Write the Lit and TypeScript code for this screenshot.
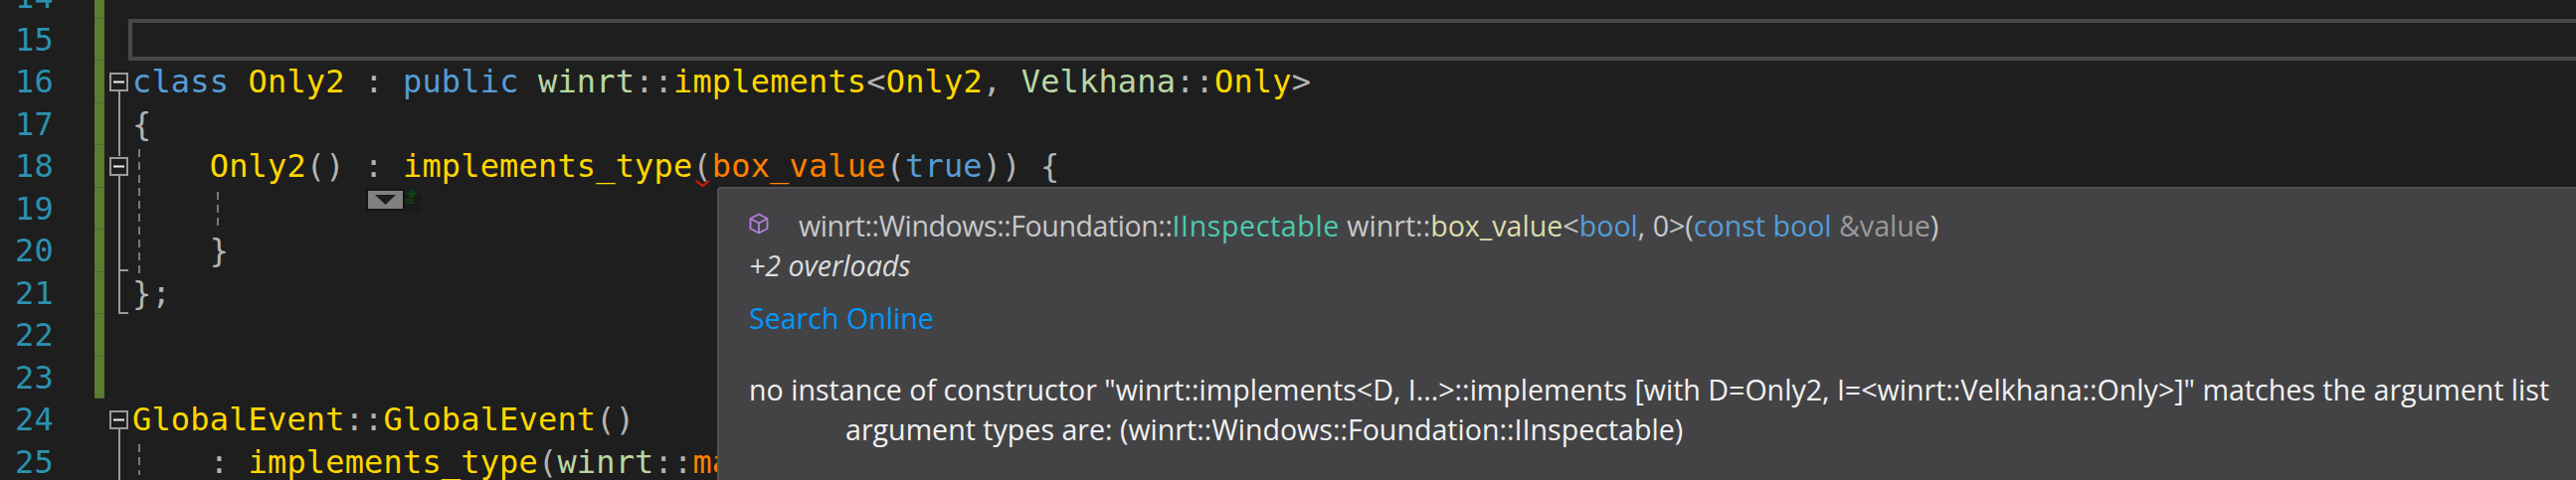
import { LitElement, html, css, svg } from "lit";
import { customElement } from "lit/decorators.js";

type Tok = [string, string];
const K = "kw", T = "ty", N = "ns", F = "fn", P = "pn";
const rows: { n: number; bar: boolean; toks: Tok[]; box?: boolean }[] = [
  { n: 14, bar: true, toks: [] },
  { n: 15, bar: true, toks: [], box: true },
  { n: 16, bar: true, toks: [[K, "class"], [P, " "], [T, "Only2"], [P, " : "], [K, "public"], [P, " "], [N, "winrt"], [P, "::"], [T, "implements"], [P, "<"], [T, "Only2"], [P, ", "], [N, "Velkhana"], [P, "::"], [T, "Only"], [P, ">"]] },
  { n: 17, bar: true, toks: [[P, "{"]] },
  { n: 18, bar: true, toks: [[P, "    "], [T, "Only2"], [P, "() : "], [T, "implements_type"], [P, "("], [F, "box_value"], [P, "("], [K, "true"], [P, ")) {"]] },
  { n: 19, bar: true, toks: [] },
  { n: 20, bar: true, toks: [[P, "    }"]] },
  { n: 21, bar: true, toks: [[P, "};"]] },
  { n: 22, bar: true, toks: [] },
  { n: 23, bar: true, toks: [] },
  { n: 24, bar: false, toks: [[T, "GlobalEvent"], [P, "::"], [T, "GlobalEvent"], [P, "()"]] },
  { n: 25, bar: false, toks: [[P, "    : "], [T, "implements_type"], [P, "("], [N, "winrt"], [P, "::"], [F, "make"]] },
];

const foldBox = (y: number) => svg`
  <rect x="111" y="${y + 1}" width="17" height="17" fill="#1e1e1e" stroke="#9a9a9a" stroke-width="2"/>
  <rect x="114" y="${y + 8.5}" width="11" height="2" fill="#f0f0f0"/>`;

@customElement("app-root")
export class AppRoot extends LitElement {
  static styles = css`
    :host { display: block; width: 2590px; height: 483px; overflow: hidden; background: #1e1e1e; }
    .editor { position: relative; width: 2590px; height: 483px; overflow: hidden; background: #1e1e1e; }
    .lines { margin-top: -24px; display: flex; flex-direction: column; }
    .row {
      display: grid; grid-template-columns: 95px 10px 24px 1fr; height: 42.5px;
      font: 32px/42.5px "DejaVu Sans Mono", monospace; letter-spacing: 0.16px; white-space: pre;
    }
    .num { color: #2b91af; padding-left: 15px; }
    .bar { background: #5b7a32; box-shadow: inset 0 -1px 0 #4e6a2b; }
    .code { padding-left: 4px; color: #b4b4b4; }
    .code.box { border: solid #484848; border-width: 4px 0 4px 4px; box-sizing: border-box; line-height: 34px; }
    .kw { color: #569cd6; }
    .ty { color: #ffd700; }
    .ns { color: #b8d7a3; }
    .fn { color: #ff8000; }
    .pn { color: #b4b4b4; }
    .guides { position: absolute; left: 0; top: 0; pointer-events: none; }
    .tag { position: absolute; left: 368px; top: 190px; display: flex; }
    .tag-btn {
      width: 35px; height: 18px; background: #808080; border: 2px solid #141414;
      display: flex; align-items: center; justify-content: center;
    }
    .tip {
      position: absolute; left: 721px; top: 188px; right: 0; bottom: 0; box-sizing: border-box;
      background: #434345; border: solid #505052; border-width: 2px 0 0 2px; border-top-left-radius: 4px;
      padding: 17px 0 0 30px; color: #c8c8c8;
      font: 28.6px/40px "Open Sans", sans-serif;
    }
    .sig { display: flex; align-items: center; gap: 30px; }
    .sig svg { flex: none; margin-top: -4px; }
    .ns-path { letter-spacing: -0.45px; }
    .teal { color: #4ec9b0; letter-spacing: 0.6px; }
    .yel { color: #dcdcaa; }
    .blue { color: #569cd6; }
    .dim { color: #9a9a9a; }
    .over { font-style: italic; color: #dcdcdc; }
    .link { color: #0098ff; margin-top: 13px; }
    .err { color: #f1f1f1; margin-top: 32px; white-space: pre; }
    .err.indent { padding-left: 97px; margin-top: 0; }
  `;

  render() {
    return html`
      <div class="editor">
        <div class="lines">
          ${rows.map((r) => html`
            <div class="row">
              <div class="num">${r.n}</div>
              <div class="${r.bar ? "bar" : ""}"></div>
              <div></div>
              <div class="code ${r.box ? "box" : ""}">${r.toks.map(([c, t]) => html`<span class=${c}>${t}</span>`)}</div>
            </div>`)}
        </div>
        <svg class="guides" width="720" height="483" fill="none">
          <path d="M120 92V157M120 177V315H129M120 272H129M120 432V483" stroke="#9a9a9a" stroke-width="2"/>
          <path d="M140 150V276M140 447V478M219 193V230" stroke="#7a7a7a" stroke-width="2" stroke-dasharray="8 5"/>
          ${foldBox(73)}${foldBox(158)}${foldBox(413)}
          <path d="M700 182L706.500 187L713 182" stroke="#e51400" stroke-width="2"/>
        </svg>
        <div class="tag">
          <div class="tag-btn">
            <svg width="21" height="10" viewBox="0 0 21 10"><path d="M0 0H21L10.500 10Z" fill="#1c1c1c"/></svg>
          </div>
          <svg width="16" height="24" viewBox="0 0 16 24">
            <rect x="0" y="5" width="16" height="19" fill="#191a19"/>
            <path d="M7 0L13 6H10V9H4V6H1Z" fill="#0f3d12"/>
            <path d="M1 11H9M1 14H9" stroke="#0f4a14" stroke-width="1.500"/>
          </svg>
        </div>
        <div class="tip">
          <div class="sig">
            <svg width="20" height="22" viewBox="0 0 20 22" fill="none" stroke="#b180d7" stroke-width="1.800" stroke-linejoin="round">
              <path d="M10 1.500L18.500 6V16L10 20.500L1.500 16V6Z"/>
              <path d="M1.500 6L10 10.500L18.500 6M10 10.500V20.500"/>
            </svg>
            <div><span class="ns-path">winrt::Windows::Foundation::</span><span class="teal">IInspectable</span> winrt::<span class="yel">box_value</span>&lt;<span class="blue">bool</span>, 0&gt;(<span class="blue">const bool</span> <span class="dim">&amp;value</span>)</div>
          </div>
          <div class="over">+2 overloads</div>
          <div class="link">Search Online</div>
          <div class="err">no instance of constructor "winrt::implements&lt;D, I...&gt;::implements [with D=Only2, I=&lt;winrt::Velkhana::Only&gt;]" matches the argument list</div>
          <div class="err indent">argument types are: (winrt::Windows::Foundation::IInspectable)</div>
        </div>
      </div>`;
  }
}
